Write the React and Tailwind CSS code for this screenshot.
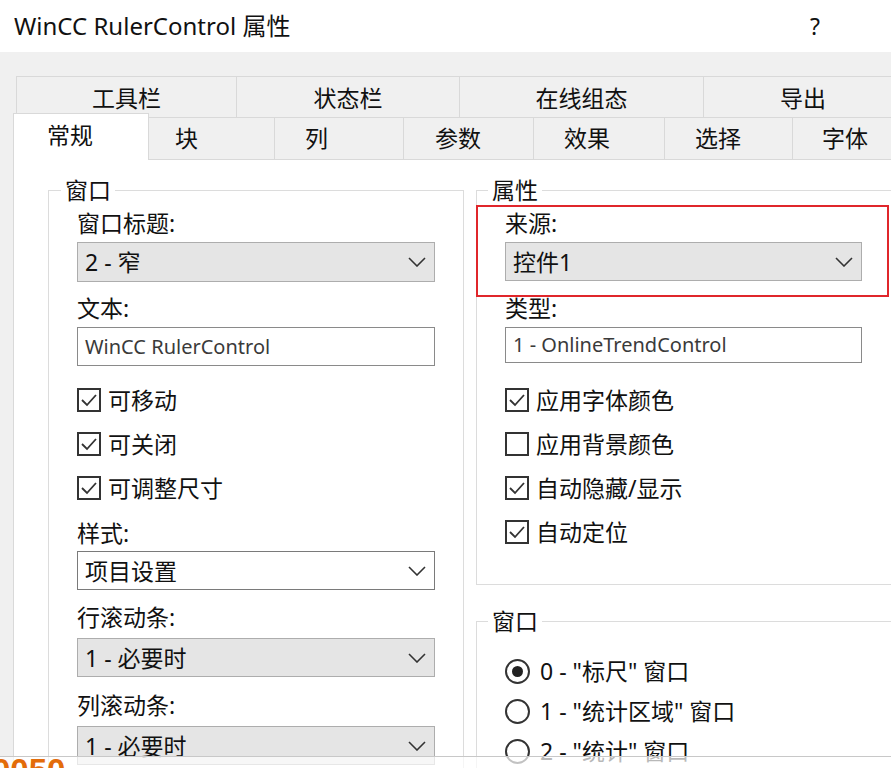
import React from "react"

const row1 = [
  { label: "工具栏", cls: "w-[220px] border-l" },
  { label: "状态栏", cls: "w-[223px] border-l" },
  { label: "在线组态", cls: "w-[244px] border-l" },
  { label: "导出", cls: "w-[200px] border-l border-r" },
]

const row2 = [
  { label: "块", cls: "w-[126px] pl-[26px]" },
  { label: "列", cls: "w-[129px] pl-[30px]" },
  { label: "参数", cls: "w-[130px] pl-[31px]" },
  { label: "效果", cls: "w-[131px] pl-[30px]" },
  { label: "选择", cls: "w-[128px] pl-[30px]" },
  { label: "字体", cls: "w-[130px] pl-[29px]" },
]

function Chevron() {
  return (
    <svg width="18" height="10" viewBox="0 0 18 10" fill="none" stroke="#333" strokeWidth="1.6">
      <polyline points="1,1 9,9 17,1" />
    </svg>
  )
}

function Combo({ value, white, cls }) {
  return (
    <div
      className={`flex items-center justify-between border pl-[7px] pr-[8px] leading-[28px] ${cls} ${
        white ? "border-[#7a7a7a] bg-white" : "border-[#adadad] bg-[#e5e5e5]"
      }`}
    >
      <span>{value}</span>
      <Chevron />
    </div>
  )
}

function TextBox({ value, cls }) {
  return (
    <div className={`flex items-center border border-[#8a8a8a] bg-white pl-[7px] text-[20px] text-[#3a3a3a] ${cls}`}>
      {value}
    </div>
  )
}

function Label({ text, cls }) {
  return <div className={`h-[28px] leading-[28px] ${cls}`}>{text}</div>
}

function Check({ label, checked = true }) {
  return (
    <div className="flex h-[44px] items-center gap-[7px]">
      <div className="flex h-[24px] w-[24px] shrink-0 items-center justify-center border-2 border-[#333] bg-white">
        {checked && (
          <svg width="18" height="18" viewBox="0 0 18 18" fill="none" stroke="#333" strokeWidth="1.8">
            <polyline points="2,9 7,14 16,4" />
          </svg>
        )}
      </div>
      <span className="leading-[28px]">{label}</span>
    </div>
  )
}

function Radio({ label, checked }) {
  return (
    <div className="flex h-[40px] items-center gap-[10px]">
      <div className="flex h-[25px] w-[25px] shrink-0 items-center justify-center rounded-full border-2 border-[#333] bg-white">
        {checked && <div className="h-[11px] w-[11px] rounded-full bg-[#222]" />}
      </div>
      <span className="leading-[28px]">{label}</span>
    </div>
  )
}

export default function App() {
  return (
    <div className="relative h-[768px] w-[891px] overflow-hidden bg-[#f0f0f0] font-['Noto_Sans','Noto_Sans_CJK_SC',sans-serif] text-[23px] text-[#111]">

      {/* title bar */}
      <div className="flex h-[52px] items-center bg-white pl-[14px]">
        <span className="text-[24px] leading-[30px]">WinCC RulerControl 属性</span>
        <span className="ml-auto leading-[30px]">?</span>
        <span className="ml-[70px] mr-[-17px] shrink-0 text-[22px] leading-[30px]">✕</span>
      </div>

      {/* tabs, back row */}
      <div className="ml-[16px] mt-[24px] flex h-[41px] w-[900px]">
        {row1.map((t) => (
          <div
            key={t.label}
            className={`flex shrink-0 items-center justify-center border-t border-[#d9d9d9] pt-[3px] ${t.cls}`}
          >
            {t.label}
          </div>
        ))}
      </div>

      {/* tabs, front row */}
      <div className="ml-[13px] flex h-[42px] w-[920px] items-end">
        <div className="relative z-10 -mb-px flex h-[47px] w-[136px] shrink-0 items-center border-x border-t border-[#d9d9d9] bg-white pl-[33px] pb-[4px]">
          常规
        </div>
        {row2.map((t) => (
          <div
            key={t.label}
            className={`flex h-[42px] shrink-0 items-center border-r border-t border-[#d9d9d9] ${t.cls}`}
          >
            {t.label}
          </div>
        ))}
      </div>

      {/* page */}
      <div className="ml-[13px] flex h-[700px] gap-[12px] border-l border-t border-[#d9d9d9] bg-white pl-[34px] pt-[19px]">

        <fieldset className="h-[640px] w-[416px] shrink-0 border border-[#dcdcdc] pl-[12px]">
          <legend className="px-[4px] leading-[22px]">窗口</legend>
          <div className="ml-[16px] w-[358px]">
            <Label text="窗口标题:" cls="mt-[8px]" />
            <Combo value="2 - 窄" cls="mt-[5px] h-[40px]" />
            <Label text="文本:" cls="mt-[12px]" />
            <TextBox value="WinCC RulerControl" cls="mt-[5px] h-[39px]" />
            <div className="mt-[12px]">
              <Check label="可移动" />
              <Check label="可关闭" />
              <Check label="可调整尺寸" />
            </div>
            <Label text="样式:" cls="mt-[9px]" />
            <Combo value="项目设置" white cls="mt-[4px] h-[39px]" />
            <Label text="行滚动条:" cls="mt-[13px]" />
            <Combo value="1 - 必要时" cls="mt-[7px] h-[39px]" />
            <Label text="列滚动条:" cls="mt-[14px]" />
            <Combo value="1 - 必要时" cls="mt-[7px] h-[39px]" />
          </div>
        </fieldset>

        <div className="w-[420px] shrink-0">
          <fieldset className="border border-[#dcdcdc] pb-[30px] pl-[11px]">
            <legend className="px-[4px] leading-[22px]">属性</legend>
            <div className="ml-[17px] w-[357px]">
              <div className="relative">
                <Label text="来源:" cls="mt-[8px]" />
                <Combo value="控件1" cls="mt-[5px] h-[39px]" />
                <div className="pointer-events-none absolute -bottom-[16px] -left-[29px] -right-[27px] -top-[4px] border-2 border-[#e0262b]" />
              </div>
              <Label text="类型:" cls="mt-[13px]" />
              <TextBox value="1 - OnlineTrendControl" cls="mt-[5px] h-[36px]" />
              <div className="mt-[15px]">
                <Check label="应用字体颜色" />
                <Check label="应用背景颜色" checked={false} />
                <Check label="自动隐藏/显示" />
                <Check label="自动定位" />
              </div>
            </div>
          </fieldset>

          <fieldset className="mt-[25px] h-[200px] border border-[#dcdcdc] pl-[11px]">
            <legend className="px-[4px] leading-[22px]">窗口</legend>
            <div className="ml-[17px] mt-[19px]">
              <Radio label={'0 - "标尺" 窗口'} checked />
              <Radio label={'1 - "统计区域" 窗口'} />
              <Radio label={'2 - "统计" 窗口'} />
            </div>
          </fieldset>
        </div>
      </div>

      {/* video overlay strip at the bottom */}
      <div className="absolute bottom-0 left-0 right-0 h-[12px] border-t border-[#c8c8c8] bg-white/70">
        <span className="absolute -left-[8px] -top-[3px] font-['Liberation_Sans',sans-serif] text-[33px] font-bold leading-none text-[#e36c0a]">
          0050
        </span>
      </div>
    </div>
  )
}
